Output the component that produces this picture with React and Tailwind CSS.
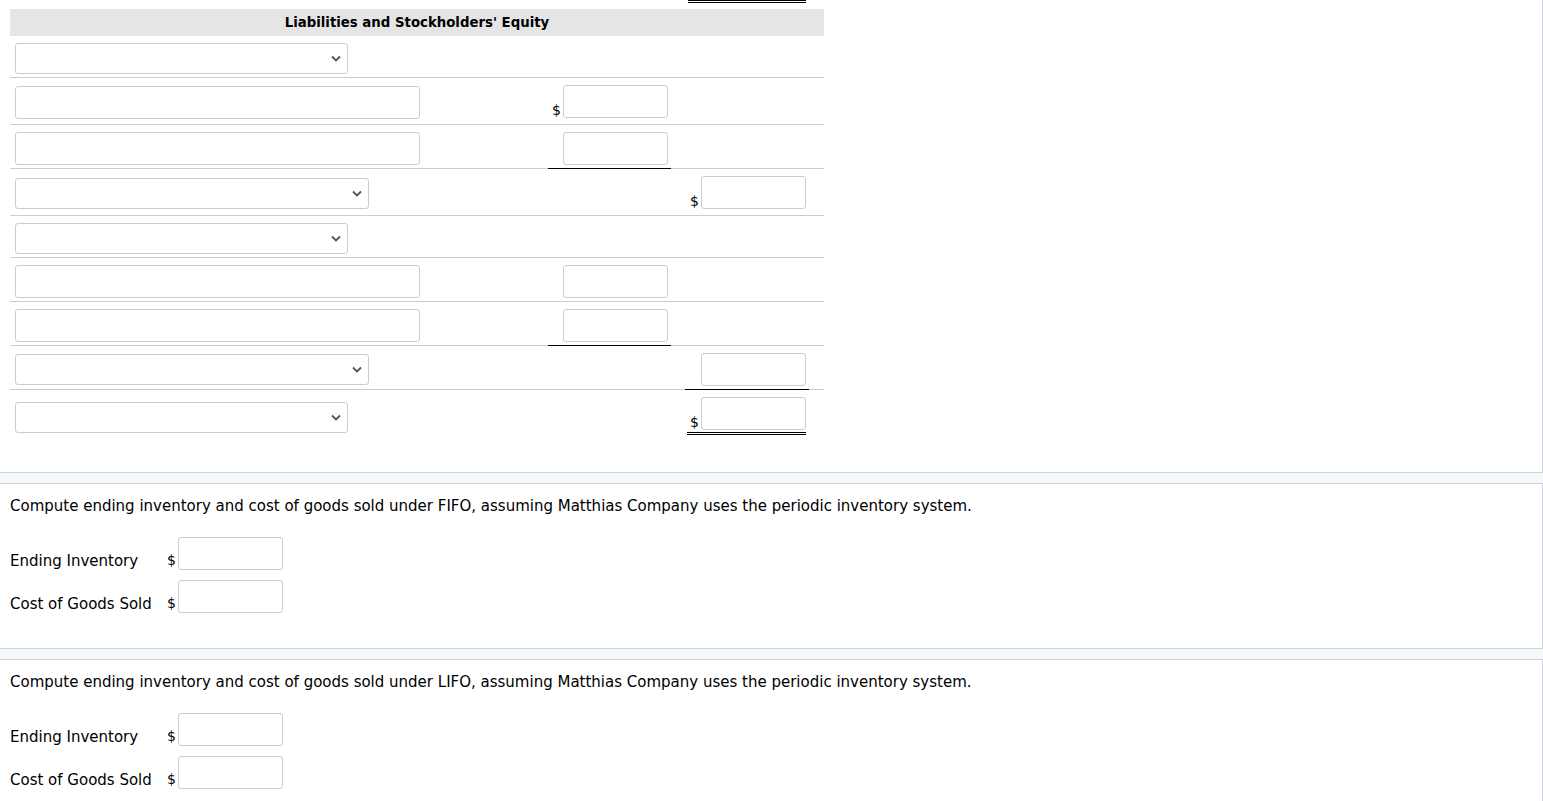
import React from 'react'

const FONT = { fontFamily: 'Verdana, "DejaVu Sans", sans-serif' }

function Chevron() {
  return (
    <svg width="10" height="7" viewBox="0 0 10 7" className="mr-[6px]">
      <path d="M1 1.5 L5 5.5 L9 1.5" fill="none" stroke="#555" strokeWidth="1.8" />
    </svg>
  )
}

function Select({ wide }) {
  return (
    <div className={`${wide ? 'w-[354px]' : 'w-[333px]'} h-[31px] border border-[#ccc] rounded-[3px] bg-white flex items-center justify-end`}>
      <Chevron />
    </div>
  )
}

function TextBox() {
  return <div className="w-[405px] h-[33px] border border-[#ccc] rounded-[3px] bg-white" />
}

function Amount({ dollar }) {
  return (
    <div className="flex items-end">
      {dollar && <span className="text-[14px] leading-[16px] mr-[2px] text-black">$</span>}
      <div className="w-[105px] h-[33px] border border-[#ccc] rounded-[3px] bg-white" />
    </div>
  )
}

// one row of the balance sheet; c2line / c3line put a black rule under that column
function Row({ h, left, c2, c3, c2line, c3line, last, leftPad = 'pt-[7px]' }) {
  const b = last ? '' : 'border-b border-[#ccc]'
  return (
    <>
      <div className={`${b} ${leftPad} pl-[5px]`} style={{ height: h }}>{left}</div>
      <div className={`${last ? '' : 'border-b'} ${c2line ? 'border-black' : 'border-[#ccc]'} pt-[7px] pr-[3px] flex justify-end items-start`} style={{ height: h }}>{c2}</div>
      <div className={b} style={{ height: h }} />
      <div className={`${last ? '' : 'border-b'} ${c3line ? 'border-black' : 'border-[#ccc]'} pt-[7px] pr-[3px] flex justify-end items-start`} style={{ height: h }}>{c3}</div>
      <div className={b} style={{ height: h }} />
    </>
  )
}

function InventoryPanel({ method }) {
  return (
    <div className="bg-white border-y border-r border-[#cdd5df] pl-[10px] pt-[12px] pb-[35px]">
      <p className="text-[15px] leading-[20px] text-black">
        Compute ending inventory and cost of goods sold under {method}, assuming Matthias Company uses the periodic inventory system.
      </p>
      <div className="mt-[21px] flex flex-col gap-[10px]">
        {['Ending Inventory', 'Cost of Goods Sold'].map(label => (
          <div key={label} className="flex items-end">
            <span className="w-[157px] text-[15px] leading-[18px] text-black">{label}</span>
            <span className="text-[14px] leading-[16px] text-black mr-[2px] pb-[2px]">$</span>
            <div className="w-[105px] h-[33px] border border-[#ccc] rounded-[3px] bg-white" />
          </div>
        ))}
      </div>
    </div>
  )
}

export default function App() {
  return (
    <div className="min-h-[801px] bg-[#f5f8fb] text-black" style={FONT}>
      <div className="bg-white border-b border-r border-[#cdd5df] pl-[10px] pb-[32px]">
        <div className="ml-[678px] w-[118px] h-[3px] border-t-[3px] border-double border-black" />
        <div className="mt-[6px] w-[814px] h-[27px] bg-[#e5e5e5] flex items-center justify-center">
          <span className="font-bold text-[13.3px] text-black">Liabilities and Stockholders' Equity</span>
        </div>
        <div className="w-[814px] grid grid-cols-[538px_123px_14px_124px_15px]">
          <Row h={42} left={<Select />} />
          <Row h={47} leftPad="pt-[8px]" left={<TextBox />} c2={<Amount dollar />} />
          <Row h={44} left={<TextBox />} c2={<Amount />} c2line />
          <Row h={47} leftPad="pt-[9px]" left={<Select wide />} c3={<Amount dollar />} />
          <Row h={42} left={<Select />} />
          <Row h={44} left={<TextBox />} c2={<Amount />} />
          <Row h={44} left={<TextBox />} c2={<Amount />} c2line />
          <Row h={44} leftPad="pt-[8px]" left={<Select wide />} c3={<Amount />} c3line />
          <Row h={50} leftPad="pt-[12px]" last left={<Select />}
            c3={<div className="border-b-[3px] border-double border-black pb-[2px] pl-[3px]"><Amount dollar /></div>} />
        </div>
      </div>
      <div className="h-[10px]" />
      <InventoryPanel method="FIFO" />
      <div className="h-[10px]" />
      <InventoryPanel method="LIFO" />
    </div>
  )
}
